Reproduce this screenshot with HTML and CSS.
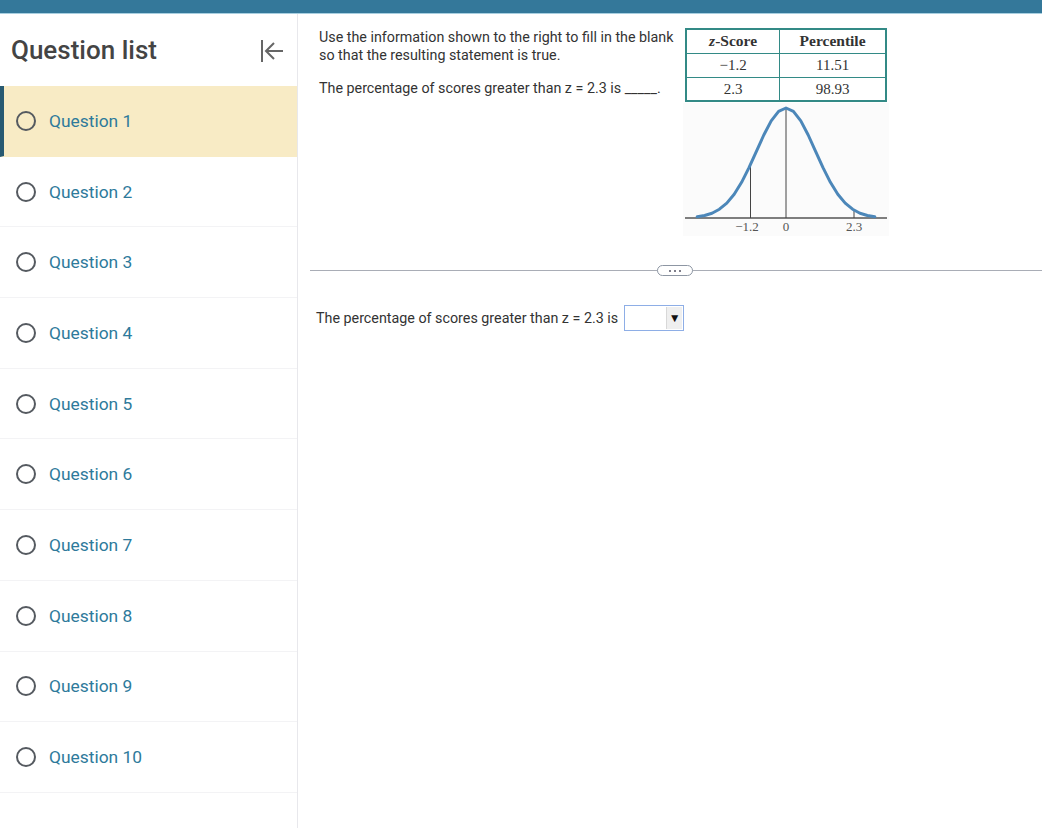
FILE: index.html
```html
<!DOCTYPE html>
<html lang="en">
<head>
<meta charset="utf-8">
<title>Question list</title>
<link rel="stylesheet" href="styles.css">
</head>
<body>
<div class="topbar"></div>
<div class="app">
  <aside class="sidebar">
    <div class="side-head">
      <h1 class="side-title">Question list</h1>
      <svg class="collapse" width="26" height="26" viewBox="0 0 26 26">
        <path d="M3 2 V24" stroke="#666" stroke-width="2" fill="none"/>
        <path d="M24 13 H8 M15 5 L7 13 L15 21" stroke="#666" stroke-width="2" fill="none"/>
      </svg>
    </div>
    <ul class="qlist">
      <li class="q active"><span class="radio"></span><span class="qtext">Question 1</span></li>
      <li class="q"><span class="radio"></span><span class="qtext">Question 2</span></li>
      <li class="q"><span class="radio"></span><span class="qtext">Question 3</span></li>
      <li class="q"><span class="radio"></span><span class="qtext">Question 4</span></li>
      <li class="q"><span class="radio"></span><span class="qtext">Question 5</span></li>
      <li class="q"><span class="radio"></span><span class="qtext">Question 6</span></li>
      <li class="q"><span class="radio"></span><span class="qtext">Question 7</span></li>
      <li class="q"><span class="radio"></span><span class="qtext">Question 8</span></li>
      <li class="q"><span class="radio"></span><span class="qtext">Question 9</span></li>
      <li class="q"><span class="radio"></span><span class="qtext">Question 10</span></li>
    </ul>
  </aside>
  <main class="main">
    <section class="prompt">
      <div class="prompt-text">
        <p>Use the information shown to the right to fill in the blank so that the resulting statement is true.</p>
        <p class="gap">The percentage of scores greater than z = 2.3 is <span class="blank">_____</span>.</p>
      </div>
      <div class="figure">
        <table class="ztable">
          <tr><th><i>z</i>-Score</th><th>Percentile</th></tr>
          <tr><td>&minus;1.2</td><td>11.51</td></tr>
          <tr><td>2.3</td><td>98.93</td></tr>
        </table>
        <svg class="curve" width="206" height="133" viewBox="0 0 206 133">
          <rect x="0" y="0" width="206" height="133" fill="#fbfbfb"/>
          <line x1="2" y1="115" x2="204" y2="115" stroke="#555" stroke-width="1.3"/>
          <line x1="67.5" y1="115" x2="67.5" y2="64" stroke="#444" stroke-width="1"/>
          <line x1="103" y1="115" x2="103" y2="5" stroke="#444" stroke-width="1"/>
          <line x1="171" y1="115" x2="171" y2="108" stroke="#444" stroke-width="1"/>
          <polyline fill="none" stroke="#4c87b9" stroke-width="3" stroke-linecap="round" stroke-linejoin="round"
            points="14.2,113.8 21.6,112.5 29,110.2 36.4,106.2 43.8,100.1 51.2,91.2 58.6,79.3 66,64.6 73.4,48.3 80.8,32 88.2,17.9 95.6,8.4 103,5 110.4,8.4 117.8,17.9 125.2,32 132.6,48.3 140,64.6 147.4,79.3 154.8,91.2 162.2,100.1 169.6,106.2 177,110.2 184.4,112.5 191.8,113.8"/>
          <text x="64" y="128" class="axlbl" text-anchor="middle">&minus;1.2</text>
          <text x="103" y="128" class="axlbl" text-anchor="middle">0</text>
          <text x="171" y="128" class="axlbl" text-anchor="middle">2.3</text>
        </svg>
      </div>
    </section>
    <div class="divider">
      <span class="more"><i></i><i></i><i></i></span>
    </div>
    <div class="answer">
      <span>The percentage of scores greater than z = 2.3 is</span>
      <span class="select"><span class="arrow">&#9660;</span></span>
    </div>
  </main>
</div>
</body>
</html>
```

FILE: styles.css
```css
* { box-sizing: border-box; }
html, body { margin: 0; padding: 0; }
body {
  font-family: Roboto, "Liberation Sans", Arial, sans-serif;
  background: #fff;
  color: #333;
  width: 1042px;
  height: 828px;
  overflow: hidden;
}
.topbar {
  height: 14px;
  background: #34789a;
  border-bottom: 1px solid #a8cfe0;
}
.app {
  display: flex;
  height: 814px;
}
.sidebar {
  width: 298px;
  flex: none;
  border-right: 1px solid #e8e8ec;
}
.side-head {
  height: 72px;
  display: flex;
  align-items: center;
  justify-content: space-between;
  padding: 0 12px 0 11px;
}
.side-title {
  margin: 0;
  font-size: 26px;
  font-weight: 500;
  color: #444;
}
.collapse { display: block; margin-top: 1px; }
.qlist {
  list-style: none;
  margin: 0;
  padding: 0;
}
.q {
  height: 70.7px;
  display: flex;
  align-items: center;
  padding-left: 16px;
  border-bottom: 1px solid #f3f3f5;
}
.q.active {
  background: #f8ebc5;
  border-left: 4px solid #285a72;
  padding-left: 12px;
  border-bottom-color: #f8ebc5;
}
.radio {
  width: 20px;
  height: 20px;
  border: 2px solid #555a60;
  border-radius: 50%;
  flex: none;
}
.qtext {
  margin-left: 13px;
  font-size: 17.4px;
  color: #2e7a9b;
}
.main {
  flex: 1;
  min-width: 0;
}
.prompt {
  display: flex;
  padding: 14px 0 0 21px;
}
.prompt-text {
  width: 364px;
  font-size: 14.3px;
  line-height: 18px;
  color: #333;
}
.prompt-text p { margin: 0; }
.prompt-text .gap { margin-top: 15px; }
.figure {
  width: 206px;
  display: flex;
  flex-direction: column;
  align-items: center;
}
.ztable {
  width: 202px;
  border-collapse: collapse;
  border: 2px solid #338a86;
  font-family: "Liberation Serif", "Times New Roman", serif;
  font-size: 15px;
  color: #333;
  text-align: center;
}
.ztable th, .ztable td {
  border: 1px solid #338a86;
  height: 24px;
  padding: 0;
  line-height: 20px;
}
.ztable th { font-weight: bold; width: 50%; font-size: 15.5px; }
.ztable th:first-child { width: 44%; }
.curve { display: block; margin-top: 1px; }
.axlbl {
  font-family: "Liberation Serif", "Times New Roman", serif;
  font-size: 13px;
  fill: #555;
}
.divider {
  margin: 34px 0 0 12px;
  height: 1px;
  background: #a9adb6;
  position: relative;
}
.more {
  position: absolute;
  left: 347px;
  top: -5px;
  width: 36px;
  height: 11px;
  border: 1px solid #8d96a3;
  border-radius: 6px;
  background: #fff;
  display: flex;
  align-items: center;
  justify-content: center;
  gap: 3px;
}
.more i {
  width: 2px;
  height: 2px;
  background: #556;
  border-radius: 50%;
}
.answer {
  display: flex;
  align-items: center;
  padding: 34px 0 0 18px;
  font-size: 14.3px;
  color: #333;
}
.select {
  margin-left: 6px;
  width: 60px;
  height: 26px;
  border: 1px solid #8eaee6;
  display: flex;
  justify-content: flex-end;
  align-items: center;
  padding-right: 1px;
}
.arrow {
  width: 16px;
  height: 22px;
  background: #efefef;
  border-left: 1px solid #d8d8d8;
  font-size: 12px;
  color: #111;
  display: flex;
  align-items: center;
  justify-content: center;
}
```
